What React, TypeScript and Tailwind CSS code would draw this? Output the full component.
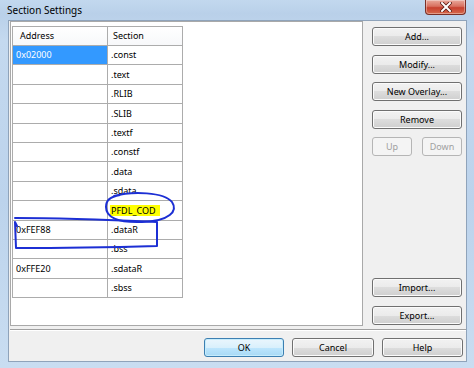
import React from "react";

const rows: { addr: string; sec: string; sel?: boolean; hl?: boolean }[] = [
  { addr: "0x02000", sec: ".const", sel: true },
  { addr: "", sec: ".text" },
  { addr: "", sec: ".RLIB" },
  { addr: "", sec: ".SLIB" },
  { addr: "", sec: ".textf" },
  { addr: "", sec: ".constf" },
  { addr: "", sec: ".data" },
  { addr: "", sec: ".sdata" },
  { addr: "", sec: "PFDL_COD", hl: true },
  { addr: "0xFEF88", sec: ".dataR" },
  { addr: "", sec: ".bss" },
  { addr: "0xFFE20", sec: ".sdataR" },
  { addr: "", sec: ".sbss" },
];

function Btn({
  label,
  w,
  disabled,
  def,
}: {
  label: string;
  w: string;
  disabled?: boolean;
  def?: boolean;
}) {
  const base =
    "h-[19px] rounded-[3px] border flex items-center justify-center text-[9px] leading-none shrink-0 ";
  const normal =
    "border-[#707070] text-black bg-[linear-gradient(to_bottom,#f2f2f2_0%,#ebebeb_50%,#dddddd_50%,#cfcfcf_100%)] shadow-[inset_0_0_0_1px_#fbfbfb]";
  const dis =
    "border-[#b5b5b5] text-[#a0a0a0] bg-[#f4f4f4]";
  const dflt =
    "border-[#3c7fb1] text-black bg-[linear-gradient(to_bottom,#eaf6fd_0%,#d9f0fc_50%,#bee6fd_50%,#a7d9f5_100%)] shadow-[inset_0_0_0_1px_#c6ecfc]";
  return (
    <div className={base + (disabled ? dis : def ? dflt : normal) + " " + w}>
      {label}
    </div>
  );
}

export default function App() {
  return (
    <div className="relative w-[474px] h-[368px] overflow-hidden flex flex-col font-['Noto_Sans','Open_Sans',sans-serif] bg-[linear-gradient(to_bottom,#c2d8ee_0px,#b9d0e9_14px,#c4d9ef_40px,#bcd3ec_200px,#c9ddf1_368px)]">
      {/* Title bar */}
      <div className="h-[20px] shrink-0 flex items-start">
        <span className="ml-[7px] mt-[3px] text-[10px] leading-[14px] text-black">
          Section Settings
        </span>
        <div className="ml-auto mr-[8px] w-[41px] h-[15px] rounded-b-[4px] border border-t-0 border-[#7a2f26] bg-[linear-gradient(to_bottom,#e9a99c_0%,#d8705f_45%,#c7402f_55%,#d66a4c_100%)] flex items-center justify-center shadow-[inset_0_0_0_1px_rgba(255,255,255,0.35)]">
          <svg width="12" height="10" viewBox="0 0 12 10">
            <path
              d="M2 1 L10 9 M10 1 L2 9"
              stroke="#5a1a12"
              strokeWidth="3.6"
              strokeLinecap="square"
            />
            <path
              d="M2 1 L10 9 M10 1 L2 9"
              stroke="#ffffff"
              strokeWidth="2"
              strokeLinecap="square"
            />
          </svg>
        </div>
      </div>

      {/* Body */}
      <div className="ml-[8px] mr-[7px] h-[342px] shrink-0 border border-[#8fa3ba] bg-[#f0f0f0] flex flex-col">
        <div className="flex pl-[1px]">
          {/* White panel with grid */}
          <div className="w-[353px] h-[305px] border border-[#a9a9a9] bg-white pl-px pt-[4px]">
            <div className="w-[171px] border-l border-t border-[#acacac] text-[9px] text-black">
              <div className="flex h-[19px] border-b border-[#acacac] bg-[linear-gradient(to_bottom,#ffffff,#f7f8fa)]">
                <div className="w-[95px] border-r border-[#acacac] pl-[7px] flex items-center">
                  Address
                </div>
                <div className="w-[75px] border-r border-[#acacac] pl-[5px] flex items-center">
                  Section
                </div>
              </div>
              {rows.map((r, i) => (
                <div key={i} className="flex h-[19.4px] border-b border-[#acacac]">
                  <div
                    className={
                      "w-[95px] border-r border-[#acacac] pl-[3px] flex items-center " +
                      (r.sel ? "bg-[#3399ff] text-white" : "")
                    }
                  >
                    {r.addr}
                  </div>
                  <div className="w-[75px] border-r border-[#acacac] pl-[3px] flex items-center">
                    {r.hl ? (
                      <span className="bg-[#ffff00] pl-[1px] pr-[4px] leading-[11px] ml-[-1px]">
                        {r.sec}
                      </span>
                    ) : (
                      r.sec
                    )}
                  </div>
                </div>
              ))}
            </div>
          </div>

          {/* Right buttons */}
          <div className="ml-[9px] w-[90px] h-[305px] pt-[6px] pb-[1px] flex flex-col">
            <div className="flex flex-col gap-[8.5px]">
              <Btn label="Add..." w="w-[90px]" />
              <Btn label="Modify..." w="w-[90px]" />
              <Btn label="New Overlay..." w="w-[90px]" />
              <Btn label="Remove" w="w-[90px]" />
              <div className="flex justify-between">
                <Btn label="Up" w="w-[40px]" disabled />
                <Btn label="Down" w="w-[40px]" disabled />
              </div>
            </div>
            <div className="mt-auto flex flex-col gap-[9px]">
              <Btn label="Import..." w="w-[90px]" />
              <Btn label="Export..." w="w-[90px]" />
            </div>
          </div>
        </div>

        {/* Separator */}
        <div className="mt-[3px] ml-[1px] h-[2px] border-t border-[#a0a0a0] border-b border-b-white" />

        {/* Bottom buttons */}
        <div className="mt-[7px] flex justify-end gap-[8px] pr-[3px]">
          <Btn label="OK" w="w-[80px]" def />
          <Btn label="Cancel" w="w-[82px]" />
          <Btn label="Help" w="w-[81px]" />
        </div>
      </div>

      {/* Hand-drawn annotations */}
      <svg
        className="absolute inset-0 pointer-events-none"
        width="474"
        height="368"
        viewBox="0 0 474 368"
      >
        <path
          d="M114 196 C132 191 164 192 172 202 C178 211 170 221 142 222 C117 223 106 217 106 207 C106 200 110 197 120 195"
          fill="none"
          stroke="#1c2fd4"
          strokeWidth="2"
          strokeLinecap="round"
        />
        <path
          d="M15 218 C40 218 90 219 157 222 L157 246 C120 247 60 248 16 248 L15 222 L17 226"
          fill="none"
          stroke="#1c2fd4"
          strokeWidth="2"
          strokeLinecap="round"
          strokeLinejoin="round"
        />
      </svg>
    </div>
  );
}
